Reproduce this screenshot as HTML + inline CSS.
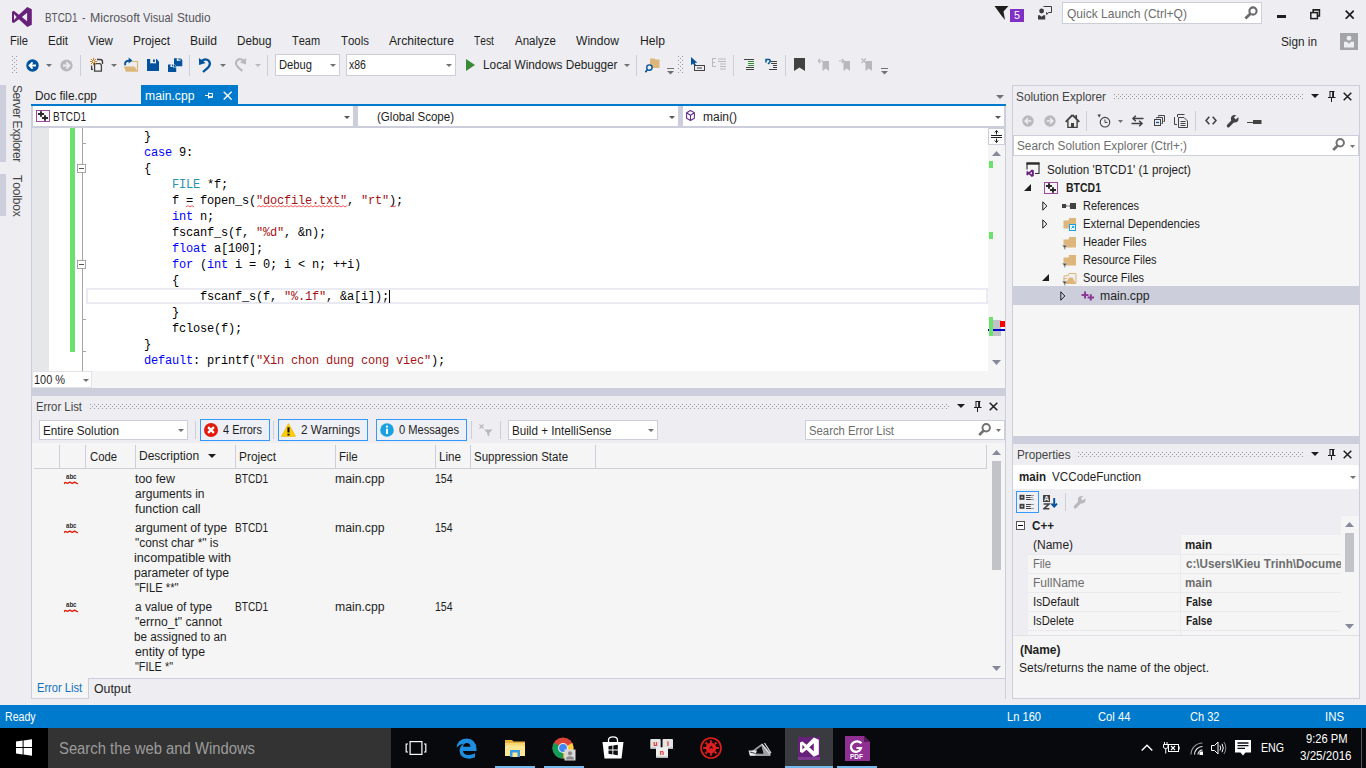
<!DOCTYPE html>
<html><head><meta charset="utf-8"><title>BTCD1 - Microsoft Visual Studio</title>
<style>
html,body{margin:0;padding:0;}
body{width:1366px;height:768px;overflow:hidden;background:#eeeef2;position:relative;font-family:"Liberation Sans",sans-serif;}
body div,body svg,body span.t{position:absolute;}
span.t{white-space:pre;line-height:1;font-family:"Liberation Sans",sans-serif;font-kerning:none;}
span.m{font-family:"Liberation Mono",monospace;}
</style></head><body>

<div style="left:0px;top:85px;width:6px;height:77px;background:#cccedb;"></div>
<div style="left:0px;top:174px;width:6px;height:42px;background:#cccedb;"></div>
<span class="t" style="left:22.5px;top:85.16px;font-size:12px;color:#444;transform-origin:0 0;transform:rotate(90deg);letter-spacing:-0.442px;">Server Explorer</span>
<span class="t" style="left:22.5px;top:174.66px;font-size:12px;color:#444;transform-origin:0 0;transform:rotate(90deg);letter-spacing:-0.171px;">Toolbox</span>
<svg style="left:12px;top:7px;" width="20" height="20" viewBox="0 0 20 20"><path fill="#68217a" d="M15.3 0L19.8 2.2V17.7L15.3 19.9L6.9 12.3L1.8 16.1L0 15.2V4.7L1.8 3.8L6.9 7.7ZM15.1 5.7L9.9 10L15.1 14.3ZM2 7.1V12.9L4.7 10Z"/></svg>
<span class="t" style="left:44.50px;top:11.00px;font-size:13px;color:#55555a;transform-origin:0.00px 50%;transform:scaleX(0.7635);">BTCD1</span>
<span class="t" style="left:82.00px;top:11.00px;font-size:13px;color:#55555a;transform-origin:0.00px 50%;transform:scaleX(0.7975);">-</span>
<span class="t" style="left:89.50px;top:11.00px;font-size:13px;color:#55555a;transform-origin:0.00px 50%;transform:scaleX(0.9479);">Microsoft</span>
<span class="t" style="left:143.00px;top:11.00px;font-size:13px;color:#55555a;transform-origin:0.00px 50%;transform:scaleX(0.8473);">Visual</span>
<span class="t" style="left:177.00px;top:11.00px;font-size:13px;color:#55555a;transform-origin:0.00px 50%;transform:scaleX(0.9080);">Studio</span>
<svg style="left:994px;top:6px;" width="15" height="14" viewBox="0 0 15 14"><path d="M0.5 0H14.5L9.5 5.5L11 14L7 9Z" fill="#1e1e1e"/></svg>
<div style="left:1010px;top:9px;width:14px;height:13px;background:#7e31c4;"></div>
<span class="t" style="left:1014.00px;top:10.25px;font-size:11.5px;color:#fff;transform-origin:0.00px 50%;transform:scaleX(0.9397);">5</span>
<svg style="left:1038px;top:6px;" width="15" height="14" viewBox="0 0 15 14"><path d="M5.5 0.5H13.5V6.5H10.5L8.7 8.6V6.5H8" fill="none" stroke="#3b3b3b" stroke-width="1"/><circle cx="3.6" cy="5" r="2.4" fill="#3b3b3b"/><path d="M0 13.5V9.2H1.8L3.6 10.8L5.4 9.2H7.2V13.5Z" fill="#3b3b3b"/></svg>
<div style="left:1062px;top:2px;width:200px;height:22px;background:#fff;border:1px solid #ccced9;box-sizing:border-box;"></div>
<svg style="left:1244px;top:6px;" width="14" height="14" viewBox="0 0 14 14"><circle cx="9" cy="5" r="3.6" fill="none" stroke="#6a6a6a" stroke-width="2.1"/><path d="M6.3 7.7L1.4 12.6" stroke="#6a6a6a" stroke-width="2.8"/></svg>
<div style="left:1277px;top:15px;width:9px;height:3px;background:#1e1e1e;"></div>
<svg style="left:1310px;top:9px;" width="11" height="11" viewBox="0 0 11 11"><path d="M3.2 3V0.9H9.4V7H7.6" fill="none" stroke="#1e1e1e" stroke-width="1.6"/><rect x="0.8" y="3.6" width="6.6" height="6" fill="none" stroke="#1e1e1e" stroke-width="1.5"/></svg>
<svg style="left:1344.5px;top:9.5px;" width="9.5" height="9.5" viewBox="0 0 9.5 9.5"><path d="M0.7 0.7L8.8 8.8M8.8 0.7L0.7 8.8" stroke="#1e1e1e" stroke-width="1.7" fill="none"/></svg>
<div style="left:1340px;top:33px;width:18px;height:17px;background:#a2a4a5;"></div>
<svg style="left:1340px;top:33px;" width="18" height="17" viewBox="0 0 18 17"><circle cx="9" cy="5.2" r="2.4" fill="#eeeef2"/><path d="M4 14.5V8.8H7L9 10.8L11 8.8H14V14.5Z" fill="#eeeef2"/></svg>
<span class="t" style="left:1067.00px;top:7.00px;font-size:13px;color:#6d6d6d;transform-origin:0.00px 50%;transform:scaleX(0.9250);">Quick Launch (Ctrl+Q)</span>
<span class="t" style="left:1280.50px;top:35.75px;font-size:12.5px;color:#1e1e1e;transform-origin:0.00px 50%;transform:scaleX(0.9427);">Sign in</span>
<span class="t" style="left:10.00px;top:34.75px;font-size:12.5px;color:#1e1e1e;transform-origin:0.00px 50%;transform:scaleX(0.8940);">File</span>
<span class="t" style="left:48.00px;top:34.75px;font-size:12.5px;color:#1e1e1e;transform-origin:0.00px 50%;transform:scaleX(0.9296);">Edit</span>
<span class="t" style="left:88.00px;top:34.75px;font-size:12.5px;color:#1e1e1e;transform-origin:0.00px 50%;transform:scaleX(0.9194);">View</span>
<span class="t" style="left:133.00px;top:34.75px;font-size:12.5px;color:#1e1e1e;transform-origin:0.00px 50%;transform:scaleX(0.9511);">Project</span>
<span class="t" style="left:190.00px;top:34.75px;font-size:12.5px;color:#1e1e1e;transform-origin:0.00px 50%;transform:scaleX(0.9711);">Build</span>
<span class="t" style="left:237.00px;top:34.75px;font-size:12.5px;color:#1e1e1e;transform-origin:0.00px 50%;transform:scaleX(0.9366);">Debug</span>
<span class="t" style="left:292.00px;top:34.75px;font-size:12.5px;color:#1e1e1e;transform-origin:0.00px 50%;transform:scaleX(0.8773);">Team</span>
<span class="t" style="left:341.00px;top:34.75px;font-size:12.5px;color:#1e1e1e;transform-origin:0.00px 50%;transform:scaleX(0.9157);">Tools</span>
<span class="t" style="left:389.00px;top:34.75px;font-size:12.5px;color:#1e1e1e;transform-origin:0.00px 50%;transform:scaleX(0.9738);">Architecture</span>
<span class="t" style="left:474.00px;top:34.75px;font-size:12.5px;color:#1e1e1e;transform-origin:0.00px 50%;transform:scaleX(0.8217);">Test</span>
<span class="t" style="left:515.00px;top:34.75px;font-size:12.5px;color:#1e1e1e;transform-origin:0.00px 50%;transform:scaleX(0.9207);">Analyze</span>
<span class="t" style="left:576.00px;top:34.75px;font-size:12.5px;color:#1e1e1e;transform-origin:0.00px 50%;transform:scaleX(0.9649);">Window</span>
<span class="t" style="left:640.00px;top:34.75px;font-size:12.5px;color:#1e1e1e;transform-origin:0.00px 50%;transform:scaleX(0.9719);">Help</span>
<svg style="left:12px;top:56px;" width="5" height="18" viewBox="0 0 5 18"><defs><pattern id="v176" width="4" height="4" patternUnits="userSpaceOnUse"><rect x="0" y="0" width="1" height="1" fill="#999"/><rect x="2" y="2" width="1" height="1" fill="#999"/></pattern></defs><rect width="5" height="18" fill="url(#v176)"/></svg>
<svg style="left:25.5px;top:58.5px;" width="13" height="13" viewBox="0 0 13 13"><circle cx="6.5" cy="6.5" r="6.2" fill="#00539c"/><path d="M10 6.5H4M6.6 3.4L3.5 6.5L6.6 9.6" stroke="#fff" stroke-width="1.8" fill="none"/></svg>
<svg style="left:46.0px;top:64.0px;" width="6" height="3" viewBox="0 0 6 3"><path d="M0 0H6L3.0 3Z" fill="#717171"/></svg>
<svg style="left:59.5px;top:58.5px;" width="13" height="13" viewBox="0 0 13 13"><circle cx="6.5" cy="6.5" r="6.1" fill="#b8b8bd"/><path d="M3 6.5H9M6.4 3.4L9.5 6.5L6.4 9.6" stroke="#eeeef2" stroke-width="1.8" fill="none"/></svg>
<div style="left:80px;top:55px;width:1px;height:21px;background:#ccced9;"></div>
<svg style="left:90px;top:57px;" width="14" height="16" viewBox="0 0 14 16"><path d="M7 2.5H10.3Q12.5 2.5 12.5 4.8V7" fill="none" stroke="#424242" stroke-width="1.4"/><path d="M4.6 6.6H10L11.4 8V14.2H4.6Z" fill="#f3f3f5" stroke="#424242" stroke-width="1.3"/><path d="M1.6 8.6V12.4H3" fill="none" stroke="#424242" stroke-width="1.3"/><path d="M3.5 0.8V8.2M-0.2 4.5H7.2M0.9 1.9L6.1 7.1M6.1 1.9L0.9 7.1" stroke="#c27d1a" stroke-width="0.95"/><circle cx="3.5" cy="4.5" r="1" fill="#eeeef2"/></svg>
<svg style="left:111.0px;top:64.0px;" width="6" height="3" viewBox="0 0 6 3"><path d="M0 0H6L3.0 3Z" fill="#717171"/></svg>
<svg style="left:123px;top:57px;" width="16" height="16" viewBox="0 0 16 16"><path d="M8 4.5H14.5V14.5" fill="none" stroke="#dcb67a" stroke-width="1.2"/><path d="M1 9.5H11.5L14.8 14.8H2.8Z" fill="#dcb67a"/><path d="M2.2 8.2Q1.2 3.6 6.8 3.6" fill="none" stroke="#00539c" stroke-width="1.9"/><path d="M5.6 0.6L9.4 3.6L5.6 6.6Z" fill="#00539c"/></svg>
<svg style="left:147px;top:59px;" width="12" height="12" viewBox="0 0 12 12"><path d="M0 0H9.6L12 2.4V12H0Z" fill="#00539c"/><rect x="3.2" y="0" width="5.8" height="4.3" fill="#eeeef2"/><rect x="6" y="0.5" width="1.9" height="2.4" fill="#00539c"/></svg>
<svg style="left:168px;top:57.5px;" width="14.5" height="14.5" viewBox="0 0 14.5 14.5"><path d="M6 0.3H12.6L14.3 2V8.3H6Z" fill="#00539c"/><rect x="8.8" y="0.3" width="3.6" height="2.6" fill="#eeeef2"/><rect x="10.6" y="0.6" width="1.2" height="1.6" fill="#00539c"/><path d="M0 6.4H5.2V9.2H8.2V14.3H0Z" fill="#00539c"/><path d="M5.2 6.4H6.4L8.2 8.2V9.2H5.2Z" fill="#00539c" stroke="#eeeef2" stroke-width="0.5"/><rect x="2.5" y="6.4" width="3" height="2.6" fill="#eeeef2"/><rect x="4" y="6.7" width="1" height="1.6" fill="#00539c"/></svg>
<div style="left:189px;top:55px;width:1px;height:21px;background:#ccced9;"></div>
<svg style="left:198px;top:56.5px;" width="14" height="16" viewBox="0 0 14 16"><path d="M3.4 4.2Q7.4 0.8 10.6 3.6Q13.4 7 10 10.6L5 15" stroke="#00539c" stroke-width="2.3" fill="none"/><path d="M0.9 1L1.1 8L7.6 6Z" fill="#00539c"/></svg>
<svg style="left:220.0px;top:64.0px;" width="6" height="3" viewBox="0 0 6 3"><path d="M0 0H6L3.0 3Z" fill="#717171"/></svg>
<svg style="left:233.5px;top:57px;" width="13" height="15" viewBox="0 0 13 15"><g transform="translate(13,0) scale(-0.93,0.93)"><path d="M3.4 4.2Q7.4 0.8 10.6 3.6Q13.4 7 10 10.6L5 15" stroke="#b8b8bd" stroke-width="2.3" fill="none"/><path d="M0.9 1L1.1 8L7.6 6Z" fill="#b8b8bd"/></g></svg>
<svg style="left:255.0px;top:64.0px;" width="6" height="3" viewBox="0 0 6 3"><path d="M0 0H6L3.0 3Z" fill="#b8b8bd"/></svg>
<div style="left:267px;top:55px;width:1px;height:21px;background:#ccced9;"></div>
<div style="left:275px;top:54px;width:65px;height:22px;background:#fff;border:1px solid #ccced9;box-sizing:border-box;"></div>
<svg style="left:329.5px;top:64.0px;" width="6" height="3" viewBox="0 0 6 3"><path d="M0 0H6L3.0 3Z" fill="#717171"/></svg>
<div style="left:346px;top:54px;width:110px;height:22px;background:#fff;border:1px solid #ccced9;box-sizing:border-box;"></div>
<svg style="left:445.5px;top:64.0px;" width="6" height="3" viewBox="0 0 6 3"><path d="M0 0H6L3.0 3Z" fill="#717171"/></svg>
<svg style="left:466px;top:59px;" width="9" height="12" viewBox="0 0 9 12"><path d="M0 0L9 6L0 12Z" fill="#388a34"/></svg>
<svg style="left:623.5px;top:64.0px;" width="6" height="3" viewBox="0 0 6 3"><path d="M0 0H6L3.0 3Z" fill="#717171"/></svg>
<div style="left:636px;top:55px;width:1px;height:21px;background:#ccced9;"></div>
<svg style="left:645px;top:58px;" width="15" height="15" viewBox="0 0 15 15"><path d="M5 0.5H9.5L10.5 1.5H14.5V10H5Z" fill="#dcb67a"/><circle cx="4.4" cy="9.6" r="2.7" fill="#eeeef2" stroke="#00539c" stroke-width="1.4"/><path d="M2.5 11.5L0.4 14.2" stroke="#00539c" stroke-width="1.7"/></svg>
<svg style="left:666.5px;top:68px;" width="7" height="7" viewBox="0 0 7 7"><path d="M0 0.5H7" stroke="#717171"/><path d="M0 3H7L3.5 6.5Z" fill="#717171"/></svg>
<svg style="left:678px;top:56px;" width="5" height="18" viewBox="0 0 5 18"><defs><pattern id="v6836" width="4" height="4" patternUnits="userSpaceOnUse"><rect x="0" y="0" width="1" height="1" fill="#999"/><rect x="2" y="2" width="1" height="1" fill="#999"/></pattern></defs><rect width="5" height="18" fill="url(#v6836)"/></svg>
<svg style="left:690px;top:57px;" width="15" height="15" viewBox="0 0 15 15"><path d="M1 0L1 8.3L3 6.4L4.8 9.8L6.4 9L4.7 5.8H7.4Z" fill="#00539c"/><rect x="4.5" y="8.5" width="10" height="5" fill="#eeeef2" stroke="#424242"/><path d="M7 11H12" stroke="#424242"/></svg>
<svg style="left:712px;top:58px;" width="15" height="13" viewBox="0 0 15 13"><path d="M4 0.5H0.5V8.5H4M0.5 4.5H3" stroke="#b8b8bd" fill="none"/><path d="M6 1H14M6 3.5H14M8 6H14M8 8.5H14M8 11H14" stroke="#b8b8bd"/></svg>
<div style="left:733px;top:55px;width:1px;height:21px;background:#ccced9;"></div>
<svg style="left:744px;top:59px;" width="11" height="11" viewBox="0 0 11 11"><path d="M0 0.5H10M2 8.5H10M2 10.5H10" stroke="#424242"/><path d="M4 2.5H10M4 4.5H10M4 6.5H10" stroke="#388a34"/></svg>
<svg style="left:765px;top:58px;" width="13" height="13" viewBox="0 0 13 13"><path d="M1 4.5V1.5H4.5Q6 2.5 4.5 4.5L3 6" stroke="#00539c" stroke-width="1.5" fill="none"/><path d="M6 3.5H12M6 5.5H12M8 7.5H12M8 9.5H12M4 11.5H12" stroke="#424242"/></svg>
<div style="left:785px;top:55px;width:1px;height:21px;background:#ccced9;"></div>
<svg style="left:794px;top:58px;" width="11" height="13" viewBox="0 0 11 13"><path d="M0 0H11V13L5.5 9.5L0 13Z" fill="#424242"/></svg>
<svg style="left:818px;top:58px;" width="12" height="13" viewBox="0 0 12 13"><path d="M4.5 3H11V13L7.8 10.5L4.5 13Z" fill="#b8b8bd"/><path d="M0 3H5M2.2 0.8L0 3L2.2 5.2" stroke="#b8b8bd" fill="none" stroke-width="1.2"/></svg>
<svg style="left:839px;top:58px;" width="12" height="13" viewBox="0 0 12 13"><path d="M4.5 3H11V13L7.8 10.5L4.5 13Z" fill="#b8b8bd"/><path d="M0 3H5M2.8 0.8L5 3L2.8 5.2" stroke="#b8b8bd" fill="none" stroke-width="1.2"/></svg>
<svg style="left:861px;top:58px;" width="12" height="13" viewBox="0 0 12 13"><path d="M4.5 3H11V13L7.8 10.5L4.5 13Z" fill="#b8b8bd"/><path d="M0.5 0.5L5 5M5 0.5L0.5 5" stroke="#b8b8bd" fill="none" stroke-width="1.2"/></svg>
<svg style="left:880.5px;top:68px;" width="7" height="7" viewBox="0 0 7 7"><path d="M0 0.5H7" stroke="#717171"/><path d="M0 3H7L3.5 6.5Z" fill="#717171"/></svg>
<span class="t" style="left:279.00px;top:58.75px;font-size:12.5px;color:#1e1e1e;transform-origin:0.00px 50%;transform:scaleX(0.8954);">Debug</span>
<span class="t" style="left:349.00px;top:58.75px;font-size:12.5px;color:#1e1e1e;transform-origin:0.00px 50%;transform:scaleX(0.8414);">x86</span>
<span class="t" style="left:483.00px;top:58.75px;font-size:12.5px;color:#1e1e1e;transform-origin:0.00px 50%;transform:scaleX(0.9445);">Local Windows Debugger</span>
<span class="t" style="left:35.00px;top:89.75px;font-size:12.5px;color:#1e1e1e;transform-origin:0.00px 50%;transform:scaleX(0.9488);">Doc file.cpp</span>
<div style="left:141px;top:85px;width:97px;height:20px;background:#007acc;"></div>
<span class="t" style="left:145.00px;top:89.75px;font-size:12.5px;color:#fff;transform-origin:0.00px 50%;transform:scaleX(0.9755);">main.cpp</span>
<svg style="left:205px;top:92px;" width="9" height="7" viewBox="0 0 9 7"><path d="M0 3.5H3.5M3.5 0.5V6.5M3.5 1.5H7.5V5.5H3.5M3.5 4.7H7.5" stroke="#fff" fill="none"/></svg>
<svg style="left:223.2px;top:90.5px;" width="9.3" height="9.3" viewBox="0 0 9.3 9.3"><path d="M0.7 0.7L8.600000000000001 8.600000000000001M8.600000000000001 0.7L0.7 8.600000000000001" stroke="#fff" stroke-width="1.4" fill="none"/></svg>
<svg style="left:995.5px;top:94.5px;" width="8" height="4" viewBox="0 0 8 4"><path d="M0 0H8L4.0 4Z" fill="#717171"/></svg>
<div style="left:31px;top:104px;width:975px;height:2px;background:#007acc;"></div>
<div style="left:31px;top:106px;width:975px;height:22px;background:#cccedb;"></div>
<div style="left:33px;top:106px;width:320px;height:20px;background:#fff;"></div>
<div style="left:358px;top:106px;width:320px;height:20px;background:#fff;"></div>
<div style="left:683px;top:106px;width:321px;height:20px;background:#fff;"></div>
<svg style="left:35.5px;top:110px;" width="14" height="12" viewBox="0 0 14 12"><rect x="0.5" y="0.5" width="13" height="11" fill="#f6f6f6" stroke="#a0489a"/><path d="M2 4H8M5 1.2V6.8M6 8H12M9 5.2V10.8" stroke="#2b2b2b" stroke-width="2" fill="none"/></svg>
<svg style="left:344.0px;top:115.5px;" width="6" height="3" viewBox="0 0 6 3"><path d="M0 0H6L3.0 3Z" fill="#555"/></svg>
<svg style="left:669.0px;top:115.5px;" width="6" height="3" viewBox="0 0 6 3"><path d="M0 0H6L3.0 3Z" fill="#555"/></svg>
<svg style="left:994.5px;top:115.5px;" width="6" height="3" viewBox="0 0 6 3"><path d="M0 0H6L3.0 3Z" fill="#555"/></svg>
<svg style="left:686px;top:110px;" width="9" height="11" viewBox="0 0 9 11"><path d="M4.5 0.6L8.4 2.8V8.2L4.5 10.4L0.6 8.2V2.8Z M0.6 2.8L4.5 5.2L8.4 2.8M4.5 5.2V10.4" fill="#fff" stroke="#652d90" stroke-width="1.1" stroke-linejoin="round"/></svg>
<span class="t" style="left:53.00px;top:110.75px;font-size:12.5px;color:#1e1e1e;transform-origin:0.00px 50%;transform:scaleX(0.8050);">BTCD1</span>
<span class="t" style="left:377.00px;top:110.75px;font-size:12.5px;color:#1e1e1e;transform-origin:0.00px 50%;transform:scaleX(0.9241);">(Global Scope)</span>
<span class="t" style="left:703.00px;top:110.75px;font-size:12.5px;color:#1e1e1e;transform-origin:0.00px 50%;transform:scaleX(0.9617);">main()</span>
<div style="left:31px;top:128px;width:975px;height:243px;background:#fff;"></div>
<div style="left:31px;top:128px;width:1px;height:268px;background:#cccedb;"></div>
<div style="left:32px;top:128px;width:17px;height:243px;background:#e6e7e8;"></div>
<div style="left:69.5px;top:128px;width:5px;height:224px;background:#6ce26c;"></div>
<div style="left:82px;top:128px;width:1px;height:243px;background:#a5a5a5;"></div>
<div style="left:82px;top:143px;width:4px;height:1px;background:#a5a5a5;"></div>
<div style="left:82px;top:319px;width:4px;height:1px;background:#a5a5a5;"></div>
<div style="left:82px;top:351px;width:4px;height:1px;background:#a5a5a5;"></div>
<div style="left:77px;top:164px;width:9px;height:9px;background:#fff;border:1px solid #a5a5a5;box-sizing:border-box;"></div>
<div style="left:79px;top:168px;width:5px;height:1px;background:#555;"></div>
<div style="left:77px;top:260px;width:9px;height:9px;background:#fff;border:1px solid #a5a5a5;box-sizing:border-box;"></div>
<div style="left:79px;top:264px;width:5px;height:1px;background:#555;"></div>
<div style="left:86px;top:287.5px;width:901.5px;height:16px;border:2px solid #eaeaf2;box-sizing:border-box;"></div>
<span class="t m" style="left:88.00px;top:131.00px;font-size:12px;color:#000;letter-spacing:-0.2px;">        }</span>
<span class="t m" style="left:88.00px;top:147.00px;font-size:12px;color:#000;letter-spacing:-0.2px;">        <span style="color:#0000ff">case</span> 9:</span>
<span class="t m" style="left:88.00px;top:163.00px;font-size:12px;color:#000;letter-spacing:-0.2px;">        {</span>
<span class="t m" style="left:88.00px;top:179.00px;font-size:12px;color:#000;letter-spacing:-0.2px;">            <span style="color:#2b91af">FILE</span> *f;</span>
<span class="t m" style="left:88.00px;top:195.00px;font-size:12px;color:#000;letter-spacing:-0.2px;">            f = fopen_s(<span style="color:#a31515">"docfile.txt"</span>, <span style="color:#a31515">"rt"</span>);</span>
<span class="t m" style="left:88.00px;top:211.00px;font-size:12px;color:#000;letter-spacing:-0.2px;">            <span style="color:#0000ff">int</span> n;</span>
<span class="t m" style="left:88.00px;top:227.00px;font-size:12px;color:#000;letter-spacing:-0.2px;">            fscanf_s(f, <span style="color:#a31515">"%d"</span>, &amp;n);</span>
<span class="t m" style="left:88.00px;top:243.00px;font-size:12px;color:#000;letter-spacing:-0.2px;">            <span style="color:#0000ff">float</span> a[100];</span>
<span class="t m" style="left:88.00px;top:259.00px;font-size:12px;color:#000;letter-spacing:-0.2px;">            <span style="color:#0000ff">for</span> (<span style="color:#0000ff">int</span> i = 0; i &lt; n; ++i)</span>
<span class="t m" style="left:88.00px;top:275.00px;font-size:12px;color:#000;letter-spacing:-0.2px;">            {</span>
<span class="t m" style="left:88.00px;top:291.00px;font-size:12px;color:#000;letter-spacing:-0.2px;">                fscanf_s(f, <span style="color:#a31515">"%.1f"</span>, &amp;a[i]);</span>
<span class="t m" style="left:88.00px;top:307.00px;font-size:12px;color:#000;letter-spacing:-0.2px;">            }</span>
<span class="t m" style="left:88.00px;top:323.00px;font-size:12px;color:#000;letter-spacing:-0.2px;">            fclose(f);</span>
<span class="t m" style="left:88.00px;top:339.00px;font-size:12px;color:#000;letter-spacing:-0.2px;">        }</span>
<span class="t m" style="left:88.00px;top:355.00px;font-size:12px;color:#000;letter-spacing:-0.2px;">        <span style="color:#0000ff">default</span>: printf(<span style="color:#a31515">"Xin chon dung cong viec"</span>);</span>
<div style="left:389px;top:290px;width:1px;height:13px;background:#000;"></div>
<svg style="left:186px;top:205px;" width="8" height="3" viewBox="0 0 8 3"><path d="M0 2 L2 0.6 L4 2 L6 0.6 L8 2 L10 0.6 L12 2" stroke="#f03030" stroke-width="0.8" fill="none"/></svg>
<svg style="left:257px;top:205px;" width="90" height="3" viewBox="0 0 90 3"><path d="M0 2 L2 0.6 L4 2 L6 0.6 L8 2 L10 0.6 L12 2 L14 0.6 L16 2 L18 0.6 L20 2 L22 0.6 L24 2 L26 0.6 L28 2 L30 0.6 L32 2 L34 0.6 L36 2 L38 0.6 L40 2 L42 0.6 L44 2 L46 0.6 L48 2 L50 0.6 L52 2 L54 0.6 L56 2 L58 0.6 L60 2 L62 0.6 L64 2 L66 0.6 L68 2 L70 0.6 L72 2 L74 0.6 L76 2 L78 0.6 L80 2 L82 0.6 L84 2 L86 0.6 L88 2 L90 0.6 L92 2" stroke="#f03030" stroke-width="0.8" fill="none"/></svg>
<svg style="left:389.5px;top:205px;" width="6" height="3" viewBox="0 0 6 3"><path d="M0 2 L2 0.6 L4 2 L6 0.6 L8 2" stroke="#f03030" stroke-width="0.8" fill="none"/></svg>
<div style="left:988px;top:128px;width:17px;height:243px;background:#f5f5f5;"></div>
<div style="left:1005px;top:128px;width:1px;height:268px;background:#cccedb;"></div>
<div style="left:988px;top:128px;width:17px;height:17px;background:#fff;border:1px solid #ccced9;box-sizing:border-box;"></div>
<svg style="left:990px;top:130px;" width="13" height="13" viewBox="0 0 13 13"><path d="M1 5.5H12M1 7.5H12M6.5 0.5V4.5M6.5 8.5V12.5M4.8 2.5L6.5 0.5L8.2 2.5M4.8 10.5L6.5 12.5L8.2 10.5" stroke="#1e1e1e" fill="none"/></svg>
<svg style="left:992px;top:151px;" width="9" height="5" viewBox="0 0 9 5"><path d="M0 5L4.5 0L9 5Z" fill="#868999"/></svg>
<svg style="left:992px;top:360px;" width="9" height="5" viewBox="0 0 9 5"><path d="M0 0H9L4.5 5Z" fill="#868999"/></svg>
<div style="left:989px;top:161px;width:4px;height:7px;background:#6ce26c;"></div>
<div style="left:989px;top:232px;width:4px;height:7px;background:#6ce26c;"></div>
<div style="left:992px;top:320px;width:9px;height:16px;background:#c2c3c9;"></div>
<div style="left:1000px;top:321px;width:5px;height:6px;background:#ff0000;"></div>
<div style="left:988px;top:329px;width:17px;height:2px;background:#0000cd;"></div>
<div style="left:989px;top:317px;width:4px;height:19px;background:#6ce26c;"></div>
<div style="left:32px;top:371px;width:973px;height:17px;background:#f5f5f5;"></div>
<div style="left:32px;top:371px;width:60px;height:17px;background:#fff;border:1px solid #e2e2ea;box-sizing:border-box;"></div>
<span class="t" style="left:34.00px;top:374.00px;font-size:12px;color:#1e1e1e;transform-origin:0.00px 50%;transform:scaleX(0.9131);">100 %</span>
<svg style="left:83.0px;top:379.0px;" width="6" height="3" viewBox="0 0 6 3"><path d="M0 0H6L3.0 3Z" fill="#717171"/></svg>
<div style="left:31px;top:388px;width:975px;height:8px;background:#cccedb;"></div>
<div style="left:31px;top:396px;width:1px;height:303px;background:#cccedb;"></div>
<div style="left:1005px;top:396px;width:1px;height:303px;background:#cccedb;"></div>
<span class="t" style="left:36.00px;top:400.75px;font-size:12.5px;color:#444;transform-origin:0.00px 50%;transform:scaleX(0.9072);">Error List</span>
<svg style="left:90px;top:404px;" width="859" height="5" viewBox="0 0 859 5"><defs><pattern id="g1304" width="4" height="4" patternUnits="userSpaceOnUse"><rect x="0" y="0" width="1" height="1" fill="#999"/><rect x="2" y="2" width="1" height="1" fill="#999"/></pattern></defs><rect width="859" height="5" fill="url(#g1304)"/></svg>
<svg style="left:956.75px;top:404.0px;" width="8" height="4" viewBox="0 0 8 4"><path d="M0 0H8L4.0 4Z" fill="#1e1e1e"/></svg>
<svg style="left:973.75px;top:401px;" width="8" height="11" viewBox="0 0 8 11"><path d="M1.5 0.5H6.5M2 0.5V6.5M5.5 0.5V6.5M4.6 0.5V6.5M0 6.5H7.5M3.5 6.5V11" stroke="#1e1e1e" stroke-width="1" fill="none"/></svg>
<svg style="left:989.05px;top:401.8px;" width="9" height="9" viewBox="0 0 9 9"><path d="M0.7 0.7L8.3 8.3M8.3 0.7L0.7 8.3" stroke="#1e1e1e" stroke-width="1.5" fill="none"/></svg>
<div style="left:39px;top:420px;width:149px;height:20px;background:#fff;border:1px solid #ccced9;box-sizing:border-box;"></div>
<span class="t" style="left:43.00px;top:425.00px;font-size:12px;color:#1e1e1e;transform-origin:0.00px 50%;transform:scaleX(0.9746);">Entire Solution</span>
<svg style="left:178.0px;top:429.0px;" width="6" height="3" viewBox="0 0 6 3"><path d="M0 0H6L3.0 3Z" fill="#717171"/></svg>
<div style="left:195px;top:421px;width:1px;height:18px;background:#ccced9;"></div>
<div style="left:200px;top:419px;width:70px;height:22px;background:#eef0f6;border:1px solid #3399ff;box-sizing:border-box;"></div>
<div style="left:278px;top:419px;width:90px;height:22px;background:#eef0f6;border:1px solid #3399ff;box-sizing:border-box;"></div>
<div style="left:376px;top:419px;width:91px;height:22px;background:#eef0f6;border:1px solid #3399ff;box-sizing:border-box;"></div>
<div style="left:273px;top:421px;width:1px;height:18px;background:#ccced9;"></div>
<div style="left:471px;top:421px;width:1px;height:18px;background:#ccced9;"></div>
<div style="left:500px;top:421px;width:1px;height:18px;background:#ccced9;"></div>
<svg style="left:204px;top:423px;" width="14" height="14" viewBox="0 0 14 14"><circle cx="7" cy="7" r="7" fill="#e21b0c"/><path d="M4.1 4.1L9.9 9.9M9.9 4.1L4.1 9.9" stroke="#fff" stroke-width="2.3"/></svg>
<svg style="left:281px;top:423px;" width="15" height="14" viewBox="0 0 15 14"><path d="M7.5 0.6L14.6 13.4H0.4Z" fill="#ffcc00" stroke="#e8b300" stroke-width="0.6"/><path d="M7.5 4.2V9.6M7.5 10.8V12.6" stroke="#111" stroke-width="2.1"/></svg>
<svg style="left:380px;top:423px;" width="14" height="14" viewBox="0 0 14 14"><circle cx="7" cy="7" r="6.8" fill="#1ba1e2"/><path d="M7 5.8V11" stroke="#fff" stroke-width="1.9"/><circle cx="7" cy="3.7" r="1.1" fill="#fff"/></svg>
<svg style="left:479px;top:424px;" width="14" height="13" viewBox="0 0 14 13"><path d="M0.5 0.5L4.5 4.5M4.5 0.5L0.5 4.5" stroke="#b8b8bd" stroke-width="1.2"/><path d="M5 5.5H13.5L10.3 9V12.5L8.3 11V9Z" fill="#b8b8bd"/></svg>
<span class="t" style="left:223.00px;top:423.75px;font-size:12.5px;color:#1e1e1e;transform-origin:0.00px 50%;transform:scaleX(0.8773);">4 Errors</span>
<span class="t" style="left:301.00px;top:423.75px;font-size:12.5px;color:#1e1e1e;transform-origin:0.00px 50%;transform:scaleX(0.9330);">2 Warnings</span>
<span class="t" style="left:399.00px;top:423.75px;font-size:12.5px;color:#1e1e1e;transform-origin:0.00px 50%;transform:scaleX(0.8901);">0 Messages</span>
<div style="left:508px;top:420px;width:150px;height:20px;background:#fff;border:1px solid #ccced9;box-sizing:border-box;"></div>
<span class="t" style="left:512.00px;top:425.00px;font-size:12px;color:#1e1e1e;transform-origin:0.00px 50%;transform:scaleX(0.9723);">Build + IntelliSense</span>
<svg style="left:648.0px;top:429.0px;" width="6" height="3" viewBox="0 0 6 3"><path d="M0 0H6L3.0 3Z" fill="#717171"/></svg>
<div style="left:805px;top:420px;width:200px;height:20px;background:#fff;border:1px solid #ccced9;box-sizing:border-box;"></div>
<span class="t" style="left:809.00px;top:425.00px;font-size:12px;color:#6d6d6d;transform-origin:0.00px 50%;transform:scaleX(0.9438);">Search Error List</span>
<svg style="left:978px;top:423px;" width="13" height="13" viewBox="0 0 13 13"><circle cx="8.2" cy="4.8" r="3.7" fill="none" stroke="#717171" stroke-width="2"/><path d="M5.6 7.6L1.2 12" stroke="#717171" stroke-width="2.7"/></svg>
<svg style="left:995.5px;top:428.5px;" width="5" height="3" viewBox="0 0 5 3"><path d="M0 0H5L2.5 3Z" fill="#717171"/></svg>
<div style="left:32px;top:443px;width:973px;height:236px;background:#f5f5f5;"></div>
<div style="left:34px;top:468px;width:953px;height:1px;background:#ccced9;"></div>
<div style="left:59px;top:445px;width:1px;height:23px;background:#ccced9;"></div>
<div style="left:85px;top:445px;width:1px;height:23px;background:#ccced9;"></div>
<div style="left:135px;top:445px;width:1px;height:23px;background:#ccced9;"></div>
<div style="left:235px;top:445px;width:1px;height:23px;background:#ccced9;"></div>
<div style="left:335px;top:445px;width:1px;height:23px;background:#ccced9;"></div>
<div style="left:435px;top:445px;width:1px;height:23px;background:#ccced9;"></div>
<div style="left:470px;top:445px;width:1px;height:23px;background:#ccced9;"></div>
<div style="left:595px;top:445px;width:1px;height:23px;background:#ccced9;"></div>
<div style="left:986px;top:445px;width:1px;height:24px;background:#ccced9;"></div>
<span class="t" style="left:90.00px;top:451.00px;font-size:12px;color:#1e1e1e;transform-origin:0.00px 50%;transform:scaleX(0.9428);">Code</span>
<span class="t" style="left:139.00px;top:450.00px;font-size:12px;color:#1e1e1e;transform-origin:0.00px 50%;transform:scaleX(1.0006);">Description</span>
<span class="t" style="left:239.00px;top:451.00px;font-size:12px;color:#1e1e1e;transform-origin:0.00px 50%;transform:scaleX(0.9901);">Project</span>
<span class="t" style="left:339.00px;top:451.00px;font-size:12px;color:#1e1e1e;transform-origin:0.00px 50%;transform:scaleX(0.9644);">File</span>
<span class="t" style="left:439.00px;top:451.00px;font-size:12px;color:#1e1e1e;transform-origin:0.00px 50%;transform:scaleX(0.9740);">Line</span>
<span class="t" style="left:474.00px;top:451.00px;font-size:12px;color:#1e1e1e;transform-origin:0.00px 50%;transform:scaleX(0.9592);">Suppression State</span>
<svg style="left:208.0px;top:454.0px;" width="8" height="4" viewBox="0 0 8 4"><path d="M0 0H8L4.0 4Z" fill="#1e1e1e"/></svg>
<span class="t" style="left:135.40px;top:473.00px;font-size:12px;color:#1e1e1e;transform-origin:0.00px 50%;transform:scaleX(1.0313);">too few</span>
<span class="t" style="left:135.40px;top:488.00px;font-size:12px;color:#1e1e1e;transform-origin:0.00px 50%;transform:scaleX(1.0026);">arguments in</span>
<span class="t" style="left:135.40px;top:503.00px;font-size:12px;color:#1e1e1e;transform-origin:0.00px 50%;transform:scaleX(1.0343);">function call</span>
<span class="t" style="left:235.00px;top:473.00px;font-size:12px;color:#1e1e1e;transform-origin:0.00px 50%;transform:scaleX(0.8406);">BTCD1</span>
<span class="t" style="left:335.00px;top:473.00px;font-size:12px;color:#1e1e1e;transform-origin:0.00px 50%;transform:scaleX(1.0181);">main.cpp</span>
<span class="t" style="left:434.50px;top:473.00px;font-size:12px;color:#1e1e1e;transform-origin:0.00px 50%;transform:scaleX(0.8781);">154</span>
<span class="t" style="left:66.00px;top:472.50px;font-size:8px;color:#2b2b2b;font-weight:bold;transform-origin:0.00px 50%;transform:scaleX(0.7600);">abc</span>
<svg style="left:64px;top:480.5px;" width="14" height="4" viewBox="0 0 14 4"><path d="M0 3Q1 0.6 2.2 1.8T4.6 1.8T7 1.8T9.4 1.8T11.8 1.8T14 2.6" stroke="#e51400" stroke-width="1.3" fill="none"/></svg>
<span class="t" style="left:135.40px;top:522.00px;font-size:12px;color:#1e1e1e;transform-origin:0.00px 50%;transform:scaleX(1.0221);">argument of type</span>
<span class="t" style="left:135.40px;top:537.00px;font-size:12px;color:#1e1e1e;transform-origin:0.00px 50%;transform:scaleX(0.9954);">"const char *" is</span>
<span class="t" style="left:134.40px;top:552.00px;font-size:12px;color:#1e1e1e;transform-origin:0.00px 50%;transform:scaleX(1.0547);">incompatible with</span>
<span class="t" style="left:134.40px;top:567.00px;font-size:12px;color:#1e1e1e;transform-origin:0.00px 50%;transform:scaleX(1.0106);">parameter of type</span>
<span class="t" style="left:135.40px;top:582.00px;font-size:12px;color:#1e1e1e;transform-origin:0.00px 50%;transform:scaleX(0.9349);">"FILE **"</span>
<span class="t" style="left:235.00px;top:522.00px;font-size:12px;color:#1e1e1e;transform-origin:0.00px 50%;transform:scaleX(0.8406);">BTCD1</span>
<span class="t" style="left:335.00px;top:522.00px;font-size:12px;color:#1e1e1e;transform-origin:0.00px 50%;transform:scaleX(1.0181);">main.cpp</span>
<span class="t" style="left:434.50px;top:522.00px;font-size:12px;color:#1e1e1e;transform-origin:0.00px 50%;transform:scaleX(0.8781);">154</span>
<span class="t" style="left:66.00px;top:521.50px;font-size:8px;color:#2b2b2b;font-weight:bold;transform-origin:0.00px 50%;transform:scaleX(0.7600);">abc</span>
<svg style="left:64px;top:529.5px;" width="14" height="4" viewBox="0 0 14 4"><path d="M0 3Q1 0.6 2.2 1.8T4.6 1.8T7 1.8T9.4 1.8T11.8 1.8T14 2.6" stroke="#e51400" stroke-width="1.3" fill="none"/></svg>
<span class="t" style="left:135.40px;top:601.00px;font-size:12px;color:#1e1e1e;transform-origin:0.00px 50%;transform:scaleX(0.9870);">a value of type</span>
<span class="t" style="left:135.40px;top:616.00px;font-size:12px;color:#1e1e1e;transform-origin:0.00px 50%;transform:scaleX(1.0122);">"errno_t" cannot</span>
<span class="t" style="left:134.40px;top:631.00px;font-size:12px;color:#1e1e1e;transform-origin:0.00px 50%;transform:scaleX(0.9770);">be assigned to an</span>
<span class="t" style="left:135.40px;top:646.00px;font-size:12px;color:#1e1e1e;transform-origin:0.00px 50%;transform:scaleX(1.0294);">entity of type</span>
<span class="t" style="left:135.40px;top:661.00px;font-size:12px;color:#1e1e1e;transform-origin:0.00px 50%;transform:scaleX(0.9077);">"FILE *"</span>
<span class="t" style="left:235.00px;top:601.00px;font-size:12px;color:#1e1e1e;transform-origin:0.00px 50%;transform:scaleX(0.8406);">BTCD1</span>
<span class="t" style="left:335.00px;top:601.00px;font-size:12px;color:#1e1e1e;transform-origin:0.00px 50%;transform:scaleX(1.0181);">main.cpp</span>
<span class="t" style="left:434.50px;top:601.00px;font-size:12px;color:#1e1e1e;transform-origin:0.00px 50%;transform:scaleX(0.8781);">154</span>
<span class="t" style="left:66.00px;top:600.50px;font-size:8px;color:#2b2b2b;font-weight:bold;transform-origin:0.00px 50%;transform:scaleX(0.7600);">abc</span>
<svg style="left:64px;top:608.5px;" width="14" height="4" viewBox="0 0 14 4"><path d="M0 3Q1 0.6 2.2 1.8T4.6 1.8T7 1.8T9.4 1.8T11.8 1.8T14 2.6" stroke="#e51400" stroke-width="1.3" fill="none"/></svg>
<div style="left:987px;top:443px;width:18px;height:235px;background:#f5f5f5;"></div>
<svg style="left:992px;top:450px;" width="9" height="5" viewBox="0 0 9 5"><path d="M0 5L4.5 0L9 5Z" fill="#868999"/></svg>
<svg style="left:992px;top:666px;" width="9" height="5" viewBox="0 0 9 5"><path d="M0 0H9L4.5 5Z" fill="#868999"/></svg>
<div style="left:992px;top:461px;width:9px;height:109px;background:#c2c3c9;"></div>
<div style="left:32px;top:678px;width:973px;height:1px;background:#cccedb;"></div>
<div style="left:31px;top:678px;width:58px;height:21px;background:#f5f5f5;border:1px solid #ccceDB;box-sizing:border-box;border-top:none;"></div>
<span class="t" style="left:37.30px;top:681.75px;font-size:12.5px;color:#0e70c0;transform-origin:0.00px 50%;transform:scaleX(0.8892);">Error List</span>
<span class="t" style="left:93.50px;top:682.75px;font-size:12.5px;color:#1e1e1e;transform-origin:0.00px 50%;transform:scaleX(0.9851);">Output</span>
<div style="left:1012px;top:85px;width:348px;height:352px;background:#f5f5f5;border:1px solid #cccedb;box-sizing:border-box;"></div>
<div style="left:1013px;top:86px;width:346px;height:50px;background:#eeeef2;"></div>
<span class="t" style="left:1016.00px;top:90.75px;font-size:12.5px;color:#444;transform-origin:0.00px 50%;transform:scaleX(0.9458);">Solution Explorer</span>
<svg style="left:1114px;top:94px;" width="189" height="5" viewBox="0 0 189 5"><defs><pattern id="g11234" width="4" height="4" patternUnits="userSpaceOnUse"><rect x="0" y="0" width="1" height="1" fill="#999"/><rect x="2" y="2" width="1" height="1" fill="#999"/></pattern></defs><rect width="189" height="5" fill="url(#g11234)"/></svg>
<svg style="left:1311.0px;top:94.0px;" width="8" height="4" viewBox="0 0 8 4"><path d="M0 0H8L4.0 4Z" fill="#1e1e1e"/></svg>
<svg style="left:1328.0px;top:91px;" width="8" height="11" viewBox="0 0 8 11"><path d="M1.5 0.5H6.5M2 0.5V6.5M5.5 0.5V6.5M4.6 0.5V6.5M0 6.5H7.5M3.5 6.5V11" stroke="#1e1e1e" stroke-width="1" fill="none"/></svg>
<svg style="left:1343.3px;top:91.8px;" width="9" height="9" viewBox="0 0 9 9"><path d="M0.7 0.7L8.3 8.3M8.3 0.7L0.7 8.3" stroke="#1e1e1e" stroke-width="1.5" fill="none"/></svg>
<svg style="left:1022px;top:115px;" width="12" height="12" viewBox="0 0 12 12"><circle cx="6" cy="6" r="5.7" fill="#b8b8bd"/><path d="M9.3 6H3.5M6 3.2L3.2 6L6 8.8" stroke="#eeeef2" stroke-width="1.6" fill="none"/></svg>
<svg style="left:1044px;top:115px;" width="12" height="12" viewBox="0 0 12 12"><circle cx="6" cy="6" r="5.7" fill="#b8b8bd"/><path d="M2.7 6H8.5M6 3.2L8.8 6L6 8.8" stroke="#eeeef2" stroke-width="1.6" fill="none"/></svg>
<svg style="left:1065px;top:114px;" width="15" height="14" viewBox="0 0 15 14"><path d="M7.5 1L14.3 7.8M7.5 1L0.7 7.8" stroke="#424242" stroke-width="1.8" fill="none"/><path d="M2.9 6.6V13.4H12.1V6.6" fill="none" stroke="#424242" stroke-width="1.4"/><rect x="6" y="9" width="3" height="4.4" fill="#424242"/><path d="M11.2 1V4.5" stroke="#424242" stroke-width="1.7"/></svg>
<div style="left:1086px;top:111px;width:1px;height:20px;background:#ccced9;"></div>
<svg style="left:1097px;top:114px;" width="14" height="14" viewBox="0 0 14 14"><circle cx="8" cy="8.2" r="4.8" fill="none" stroke="#424242" stroke-width="1.1"/><path d="M8 5.5V8.5H10.5" stroke="#424242" fill="none"/><path d="M0.5 0.5H4L2.2 3.5Z" fill="#424242"/></svg>
<svg style="left:1117.5px;top:120.0px;" width="5" height="3" viewBox="0 0 5 3"><path d="M0 0H5L2.5 3Z" fill="#717171"/></svg>
<svg style="left:1131px;top:115px;" width="13" height="12" viewBox="0 0 13 12"><path d="M12.5 3.5H2M4.8 0.8L2 3.5L4.8 6.2M0.5 8.5H11M8.2 5.8L11 8.5L8.2 11.2" stroke="#424242" stroke-width="1.5" fill="none"/></svg>
<svg style="left:1154px;top:115px;" width="11" height="11" viewBox="0 0 11 11"><path d="M4.5 1.5V0.5H10.5V6.5H9.5M2.5 3.5V2.5H8.5V8.5H7.5" fill="none" stroke="#424242"/><rect x="0.5" y="4.5" width="6" height="6" fill="none" stroke="#424242"/><path d="M2 7.5H5" stroke="#00539c" stroke-width="1.3"/></svg>
<svg style="left:1174px;top:114px;" width="14" height="14" viewBox="0 0 14 14"><path d="M3.5 3V0.5H10.5M0.5 3V10.5H3" fill="none" stroke="#424242"/><path d="M4.5 3.5H10L13.5 7V13.5H4.5Z" fill="none" stroke="#424242"/><path d="M6.5 7.5H11.5M6.5 9.5H11.5M6.5 11.5H11.5" stroke="#424242"/></svg>
<div style="left:1195px;top:111px;width:1px;height:20px;background:#ccced9;"></div>
<svg style="left:1205px;top:116px;" width="12" height="9" viewBox="0 0 12 9"><path d="M4.3 0.8L1 4.5L4.3 8.2M7.7 0.8L11 4.5L7.7 8.2" stroke="#424242" stroke-width="1.6" fill="none"/></svg>
<svg style="left:1226px;top:114px;" width="13" height="14" viewBox="0 0 13 14"><path d="M2.3 11.8L7.4 6.6" stroke="#424242" stroke-width="3.1" stroke-linecap="round"/><circle cx="8.7" cy="4.7" r="3.8" fill="#424242"/><path d="M8.9 4.5L13.2 0.2" stroke="#eeeef2" stroke-width="2.7"/></svg>
<svg style="left:1247px;top:118px;" width="15" height="6" viewBox="0 0 15 6"><path d="M0 4.5H6" stroke="#424242"/><rect x="6" y="2" width="8.5" height="4" fill="#424242"/></svg>
<div style="left:1013px;top:135px;width:346px;height:21px;background:#fff;border:1px solid #ccced9;box-sizing:border-box;"></div>
<span class="t" style="left:1017.00px;top:140.00px;font-size:12px;color:#6d6d6d;transform-origin:0.00px 50%;transform:scaleX(0.9823);">Search Solution Explorer (Ctrl+;)</span>
<svg style="left:1332px;top:138px;" width="13" height="13" viewBox="0 0 13 13"><circle cx="8.2" cy="4.8" r="3.7" fill="none" stroke="#717171" stroke-width="2"/><path d="M5.6 7.6L1.2 12" stroke="#717171" stroke-width="2.7"/></svg>
<svg style="left:1349.5px;top:144.5px;" width="5" height="3" viewBox="0 0 5 3"><path d="M0 0H5L2.5 3Z" fill="#717171"/></svg>
<div style="left:1013px;top:286px;width:346px;height:19px;background:#cccedb;"></div>
<span class="t" style="left:1046.50px;top:164.00px;font-size:12px;color:#1e1e1e;transform-origin:0.00px 50%;transform:scaleX(0.9732);">Solution 'BTCD1' (1 project)</span>
<span class="t" style="left:1066.00px;top:182.00px;font-size:12px;color:#1e1e1e;font-weight:bold;transform-origin:0.00px 50%;transform:scaleX(0.8757);">BTCD1</span>
<span class="t" style="left:1083.00px;top:200.00px;font-size:12px;color:#1e1e1e;transform-origin:0.00px 50%;transform:scaleX(0.9127);">References</span>
<span class="t" style="left:1083.00px;top:218.00px;font-size:12px;color:#1e1e1e;transform-origin:0.00px 50%;transform:scaleX(0.9430);">External Dependencies</span>
<span class="t" style="left:1083.00px;top:236.00px;font-size:12px;color:#1e1e1e;transform-origin:0.00px 50%;transform:scaleX(0.9338);">Header Files</span>
<span class="t" style="left:1083.00px;top:254.00px;font-size:12px;color:#1e1e1e;transform-origin:0.00px 50%;transform:scaleX(0.9187);">Resource Files</span>
<span class="t" style="left:1083.00px;top:272.00px;font-size:12px;color:#1e1e1e;transform-origin:0.00px 50%;transform:scaleX(0.9148);">Source Files</span>
<span class="t" style="left:1100.00px;top:290.00px;font-size:12px;color:#1e1e1e;transform-origin:0.00px 50%;transform:scaleX(1.0181);">main.cpp</span>
<svg style="left:1026px;top:162px;" width="14" height="15" viewBox="0 0 14 15"><path d="M1 7.5V1H13V11.5H9" fill="none" stroke="#2b2b2b" stroke-width="1.1"/><rect x="0.5" y="0.5" width="13" height="2.2" fill="#2b2b2b"/><path d="M5.8 7.4L7.8 8.3V14.1L5.8 15L2.9 12.2L1.4 13.4L0.5 13V9.4L1.4 9L2.9 10.2Z M5.8 9.8L3.9 11.2L5.8 12.6Z" fill="#68217a"/></svg>
<svg style="left:1023.5px;top:184px;" width="7" height="7" viewBox="0 0 7 7"><path d="M7 0V7H0Z" fill="#1e1e1e"/></svg>
<svg style="left:1043.5px;top:181.5px;" width="14" height="12" viewBox="0 0 14 12"><rect x="0.5" y="0.5" width="13" height="11" fill="#f6f6f6" stroke="#a0489a"/><path d="M2 4H8M5 1.2V6.8M6 8H12M9 5.2V10.8" stroke="#2b2b2b" stroke-width="2" fill="none"/></svg>
<svg style="left:1042px;top:201px;" width="6" height="10" viewBox="0 0 6 10"><path d="M0.8 0.8L4.8 5L0.8 9.2Z" fill="none" stroke="#1e1e1e" stroke-width="1"/></svg>
<svg style="left:1042px;top:219px;" width="6" height="10" viewBox="0 0 6 10"><path d="M0.8 0.8L4.8 5L0.8 9.2Z" fill="none" stroke="#1e1e1e" stroke-width="1"/></svg>
<svg style="left:1059.5px;top:291px;" width="6" height="10" viewBox="0 0 6 10"><path d="M0.8 0.8L4.8 5L0.8 9.2Z" fill="none" stroke="#1e1e1e" stroke-width="1"/></svg>
<svg style="left:1041.7px;top:274.2px;" width="7" height="7" viewBox="0 0 7 7"><path d="M7 0V7H0Z" fill="#1e1e1e"/></svg>
<svg style="left:1062px;top:201.5px;" width="14" height="8" viewBox="0 0 14 8"><rect x="0" y="2" width="4" height="4" fill="#424242"/><path d="M4 4H8" stroke="#424242" stroke-width="1.2" stroke-dasharray="1.5 1"/><rect x="8" y="1" width="6" height="6" fill="#424242"/></svg>
<svg style="left:1061.5px;top:216.5px;" width="15" height="14" viewBox="0 0 15 14"><path d="M7 1H14V3H7Z" fill="#dcb67a"/><path d="M1.5 3.6H6.2L7.4 2.4H14V11.5H1.5Z" fill="#dcb67a"/><rect x="7.5" y="7.5" width="6" height="6" fill="#fff" stroke="#1ba1e2"/><path d="M9.3 11.7L11.7 9.3M9.8 9.3H11.7V11.2" stroke="#1ba1e2" fill="none"/></svg>
<svg style="left:1061.5px;top:235.5px;" width="15" height="14" viewBox="0 0 15 14"><path d="M7 1H14V3H7Z" fill="#dcb67a"/><path d="M1.5 3.6H6.2L7.4 2.4H14V11.5H1.5Z" fill="#dcb67a"/><path d="M0 9.2H5.4L3.3 11.4V13.8L2.1 13V11.4Z" fill="#424242" stroke="#f5f5f5" stroke-width="0.5"/></svg>
<svg style="left:1061.5px;top:253.5px;" width="15" height="14" viewBox="0 0 15 14"><path d="M7 1H14V3H7Z" fill="#dcb67a"/><path d="M1.5 3.6H6.2L7.4 2.4H14V11.5H1.5Z" fill="#dcb67a"/><path d="M0 9.2H5.4L3.3 11.4V13.8L2.1 13V11.4Z" fill="#424242" stroke="#f5f5f5" stroke-width="0.5"/></svg>
<svg style="left:1061.5px;top:271.5px;" width="15" height="14" viewBox="0 0 15 14"><path d="M7 1.5H14V11.5H2V3.8H6.3Z" fill="#f0eff1" stroke="#dcb67a" stroke-width="1"/><path d="M7.2 5.5H10.5L13.5 11H3.5Z" fill="#dcb67a"/><path d="M2 11V6.5H5" fill="none" stroke="#dcb67a"/><path d="M0 9.2H5.4L3.3 11.4V13.8L2.1 13V11.4Z" fill="#424242" stroke="#f5f5f5" stroke-width="0.5"/></svg>
<svg style="left:1080.5px;top:291px;" width="14" height="10" viewBox="0 0 14 10"><path d="M4 0.5V7.5M0.5 4H7.5M9.8 3.2V9.6M6.6 6.4H13" stroke="#8d3a94" stroke-width="2" fill="none"/></svg>
<div style="left:1012px;top:436px;width:348px;height:8px;background:#cccedb;"></div>
<div style="left:1012px;top:443px;width:348px;height:256px;background:#f5f5f5;border:1px solid #cccedb;box-sizing:border-box;"></div>
<div style="left:1013px;top:444px;width:346px;height:22px;background:#eeeef2;"></div>
<span class="t" style="left:1016.50px;top:448.75px;font-size:12.5px;color:#444;transform-origin:0.00px 50%;transform:scaleX(0.9395);">Properties</span>
<svg style="left:1078px;top:452px;" width="225" height="5" viewBox="0 0 225 5"><defs><pattern id="g11232" width="4" height="4" patternUnits="userSpaceOnUse"><rect x="0" y="0" width="1" height="1" fill="#999"/><rect x="2" y="2" width="1" height="1" fill="#999"/></pattern></defs><rect width="225" height="5" fill="url(#g11232)"/></svg>
<svg style="left:1311.0px;top:452.0px;" width="8" height="4" viewBox="0 0 8 4"><path d="M0 0H8L4.0 4Z" fill="#1e1e1e"/></svg>
<svg style="left:1328.0px;top:449px;" width="8" height="11" viewBox="0 0 8 11"><path d="M1.5 0.5H6.5M2 0.5V6.5M5.5 0.5V6.5M4.6 0.5V6.5M0 6.5H7.5M3.5 6.5V11" stroke="#1e1e1e" stroke-width="1" fill="none"/></svg>
<svg style="left:1343.3px;top:449.8px;" width="9" height="9" viewBox="0 0 9 9"><path d="M0.7 0.7L8.3 8.3M8.3 0.7L0.7 8.3" stroke="#1e1e1e" stroke-width="1.5" fill="none"/></svg>
<div style="left:1013px;top:465px;width:345px;height:24px;background:#fff;"></div>
<span class="t" style="left:1018.50px;top:471.00px;font-size:12px;color:#1e1e1e;font-weight:bold;transform-origin:0.00px 50%;transform:scaleX(0.9636);">main</span>
<span class="t" style="left:1051.50px;top:471.00px;font-size:12px;color:#1e1e1e;transform-origin:0.00px 50%;transform:scaleX(0.9744);">VCCodeFunction</span>
<svg style="left:1349.5px;top:476.0px;" width="6" height="3" viewBox="0 0 6 3"><path d="M0 0H6L3.0 3Z" fill="#717171"/></svg>
<div style="left:1013px;top:489px;width:346px;height:27px;background:#eeeef2;"></div>
<div style="left:1016px;top:491px;width:23px;height:22px;background:#eef0f6;border:1px solid #3399ff;box-sizing:border-box;"></div>
<div style="left:1065px;top:493px;width:1px;height:18px;background:#ccced9;"></div>
<svg style="left:1019px;top:494px;" width="17" height="16" viewBox="0 0 17 16"><rect x="0.5" y="0.8" width="5" height="5" fill="#424242"/><rect x="0.5" y="9.8" width="5" height="5" fill="#424242"/><rect x="2.3" y="2.6" width="1.4" height="1.4" fill="#eeeef2"/><rect x="2.3" y="11.6" width="1.4" height="1.4" fill="#eeeef2"/><path d="M7 1.5H12.5M13.5 1.5H14.5M7 3.5H11.5M12.5 3.5H13.5M7 5.5H12.5M13.5 5.5H14.5M7 10.5H12.5M13.5 10.5H14.5M7 12.5H11.5M7 14.5H12.5M13.5 14.5H14.5" stroke="#424242"/></svg>
<svg style="left:1043px;top:494px;" width="15" height="16" viewBox="0 0 15 16"><rect x="0" y="1" width="7" height="7" fill="#424242"/><text x="3.5" y="7" font-family="Liberation Sans" font-size="7" font-weight="bold" text-anchor="middle" fill="#eeeef2">A</text><path d="M0.6 10H6L0.8 14.8H6.4" stroke="#424242" stroke-width="1.6" fill="none"/><path d="M11.2 4V12M8.4 9.6L11.2 12.6L14 9.6" stroke="#00539c" stroke-width="1.9" fill="none"/></svg>
<svg style="left:1073px;top:494.5px;" width="13" height="14" viewBox="0 0 13 14"><path d="M2.3 11.8L7.4 6.6" stroke="#b8b8bd" stroke-width="3.1" stroke-linecap="round"/><circle cx="8.7" cy="4.7" r="3.8" fill="#b8b8bd"/><path d="M8.9 4.5L13.2 0.2" stroke="#eeeef2" stroke-width="2.7"/></svg>
<div style="left:1013px;top:516px;width:346px;height:119px;background:#f5f5f5;"></div>
<div style="left:1013px;top:516px;width:328px;height:19px;background:#eeeef2;"></div>
<div style="left:1013px;top:535px;width:15px;height:100px;background:#eeeef2;"></div>
<div style="left:1028px;top:535px;width:152px;height:19px;background:#eeeef2;"></div>
<div style="left:1028px;top:554px;width:313px;height:1px;background:#e9e9ee;"></div>
<div style="left:1028px;top:573px;width:313px;height:1px;background:#e9e9ee;"></div>
<div style="left:1028px;top:592px;width:313px;height:1px;background:#e9e9ee;"></div>
<div style="left:1028px;top:611px;width:313px;height:1px;background:#e9e9ee;"></div>
<div style="left:1028px;top:630px;width:313px;height:1px;background:#e9e9ee;"></div>
<div style="left:1180px;top:535px;width:1px;height:100px;background:#e9e9ee;"></div>
<div style="left:1016px;top:521px;width:9px;height:9px;background:#fff;border:1px solid #555;box-sizing:border-box;"></div>
<div style="left:1018px;top:525px;width:5px;height:1px;background:#000;"></div>
<span class="t" style="left:1031.50px;top:520.00px;font-size:12px;color:#1e1e1e;font-weight:bold;transform-origin:0.00px 50%;transform:scaleX(0.9700);">C++</span>
<span class="t" style="left:1032.50px;top:539.00px;font-size:12px;color:#1e1e1e;transform-origin:0.00px 50%;transform:scaleX(1.0015);">(Name)</span>
<span class="t" style="left:1184.50px;top:539.00px;font-size:12px;color:#1e1e1e;font-weight:bold;transform-origin:0.00px 50%;transform:scaleX(0.9636);">main</span>
<span class="t" style="left:1032.50px;top:558.00px;font-size:12px;color:#6d6d6d;transform-origin:0.00px 50%;transform:scaleX(0.9361);">File</span>
<span class="t" style="left:1185.50px;top:558.00px;font-size:12px;color:#6d6d6d;font-weight:bold;transform-origin:0.00px 50%;transform:scaleX(0.9709);">c:\Users\Kieu Trinh\Docume</span>
<span class="t" style="left:1032.50px;top:577.00px;font-size:12px;color:#6d6d6d;transform-origin:0.00px 50%;transform:scaleX(1.0044);">FullName</span>
<span class="t" style="left:1184.50px;top:577.00px;font-size:12px;color:#6d6d6d;font-weight:bold;transform-origin:0.00px 50%;transform:scaleX(0.9636);">main</span>
<span class="t" style="left:1032.50px;top:596.00px;font-size:12px;color:#1e1e1e;transform-origin:0.00px 50%;transform:scaleX(0.9709);">IsDefault</span>
<span class="t" style="left:1185.50px;top:596.00px;font-size:12px;color:#1e1e1e;font-weight:bold;transform-origin:0.00px 50%;transform:scaleX(0.8486);">False</span>
<span class="t" style="left:1032.50px;top:615.00px;font-size:12px;color:#1e1e1e;transform-origin:0.00px 50%;transform:scaleX(0.9328);">IsDelete</span>
<span class="t" style="left:1185.50px;top:615.00px;font-size:12px;color:#1e1e1e;font-weight:bold;transform-origin:0.00px 50%;transform:scaleX(0.8486);">False</span>
<div style="left:1341px;top:516px;width:17px;height:119px;background:#f5f5f5;"></div>
<svg style="left:1345px;top:522px;" width="9" height="5" viewBox="0 0 9 5"><path d="M0 5L4.5 0L9 5Z" fill="#868999"/></svg>
<svg style="left:1345px;top:624px;" width="9" height="5" viewBox="0 0 9 5"><path d="M0 0H9L4.5 5Z" fill="#868999"/></svg>
<div style="left:1345px;top:533px;width:9px;height:39px;background:#c2c3c9;"></div>
<div style="left:1013px;top:635px;width:346px;height:1px;background:#e0e0e6;"></div>
<div style="left:1013px;top:636px;width:346px;height:62px;background:#f5f5f5;"></div>
<span class="t" style="left:1019.50px;top:644.00px;font-size:12px;color:#1e1e1e;font-weight:bold;transform-origin:0.00px 50%;transform:scaleX(0.9954);">(Name)</span>
<span class="t" style="left:1018.50px;top:662.00px;font-size:12px;color:#1e1e1e;transform-origin:0.00px 50%;transform:scaleX(0.9993);">Sets/returns the name of the object.</span>
<div style="left:0px;top:705px;width:1366px;height:23px;background:#007acc;"></div>
<span class="t" style="left:4.80px;top:710.75px;font-size:12.5px;color:#fff;transform-origin:0.00px 50%;transform:scaleX(0.8477);">Ready</span>
<span class="t" style="left:1006.50px;top:710.75px;font-size:12.5px;color:#fff;transform-origin:0.00px 50%;transform:scaleX(0.8889);">Ln 160</span>
<span class="t" style="left:1097.50px;top:710.75px;font-size:12.5px;color:#fff;transform-origin:0.00px 50%;transform:scaleX(0.8983);">Col 44</span>
<span class="t" style="left:1189.50px;top:710.75px;font-size:12.5px;color:#fff;transform-origin:0.00px 50%;transform:scaleX(0.8833);">Ch 32</span>
<span class="t" style="left:1324.50px;top:710.75px;font-size:12.5px;color:#fff;transform-origin:0.00px 50%;transform:scaleX(0.9127);">INS</span>
<div style="left:0px;top:728px;width:1366px;height:40px;background:#08090c;"></div>
<div style="left:0px;top:728px;width:48px;height:40px;background:#000;"></div>
<div style="left:48px;top:728px;width:343px;height:40px;background:#333;"></div>
<span class="t" style="left:59.00px;top:740.50px;font-size:16px;color:#9c9c9c;transform-origin:0.00px 50%;transform:scaleX(0.9260);">Search the web and Windows</span>
<svg style="left:16px;top:739px;" width="16" height="17" viewBox="0 0 16 17"><path d="M0 2.6L6.6 1.6V8H0ZM7.6 1.45L16 0.2V8H7.6ZM0 9H6.6V15.4L0 14.4ZM7.6 9H16V16.8L7.6 15.55Z" fill="#fff"/></svg>
<svg style="left:405px;top:741px;" width="22" height="14" viewBox="0 0 22 14"><rect x="5.1" y="0.6" width="11.8" height="12.8" fill="none" stroke="#fff" stroke-width="1.2"/><path d="M3 3H1.2V11H3M19 3H20.8V11H19" fill="none" stroke="#fff" stroke-width="1.2"/></svg>
<svg style="left:456px;top:738px;" width="21" height="21" viewBox="0 0 21 21"><path d="M0.5 9.5Q1.5 1 10.5 0.5Q20 0.8 20.5 11V13H7Q7.5 17 12.5 17Q16 17 19 15.2V19.3Q15.5 21 11.5 20.6Q4 20 3.5 12.5Q3.8 8 8 5.8Q4 6 0.5 9.5ZM7 8.8H14.5Q14.3 5 10.8 5Q7.6 5.2 7 8.8Z" fill="#1e8fe0"/></svg>
<svg style="left:504px;top:738px;" width="22" height="19" viewBox="0 0 22 19"><path d="M1 2H8L9.5 3.5H21V6H1Z" fill="#e8b13c"/><rect x="1" y="5" width="20" height="13" fill="#f7d774"/><path d="M1 18V9L3 7.5H19L21 9V18Z" fill="#ffe794"/><path d="M6 12H16V19H6Z" fill="#3a9ae0"/><rect x="8.5" y="14.5" width="5" height="4.5" fill="#ffe794"/></svg>
<div style="left:495px;top:766px;width:40px;height:2px;background:#76b9ed;"></div>
<svg style="left:552px;top:737px;" width="24" height="24" viewBox="0 0 24 24"><circle cx="11" cy="11" r="10.5" fill="#db4437"/><path d="M11 11L1.9 5.8A10.5 10.5 0 0 0 11.5 21.5Z" fill="#0f9d58"/><path d="M11 11L11.5 21.5A10.5 10.5 0 0 0 20.3 6Z" fill="#ffcd40"/><circle cx="11" cy="11" r="4.9" fill="#f1f1f1"/><circle cx="11" cy="11" r="3.9" fill="#4285f4"/><rect x="12.5" y="12.5" width="11" height="11" fill="#d9d9d9"/><circle cx="18" cy="16.3" r="2.1" fill="#8a8a8a"/><path d="M14 22.5Q14 19.2 18 19.2Q22 19.2 22 22.5Z" fill="#8a8a8a"/></svg>
<div style="left:544px;top:766px;width:40px;height:2px;background:#76b9ed;"></div>
<svg style="left:602px;top:736px;" width="22" height="23" viewBox="0 0 22 23"><path d="M6.5 6V4Q6.5 0.8 11 0.8Q15.5 0.8 15.5 4V6" fill="none" stroke="#fff" stroke-width="1.3"/><path d="M0.5 6H21.5L19.5 22.5H2.5Z" fill="#fff"/><path d="M6.5 10.2L10.4 9.6V13.6H6.5ZM11.3 9.5L15.8 8.8V13.6H11.3ZM6.5 14.4H10.4V18.4L6.5 17.8ZM11.3 14.4H15.8V19.2L11.3 18.5Z" fill="#0b0c10"/></svg>
<svg style="left:650px;top:738px;" width="24" height="21" viewBox="0 0 24 21"><rect x="0.3" y="1" width="10.4" height="10" rx="1" fill="#e4e4e4"/><rect x="12.5" y="1" width="10.5" height="10" rx="1" fill="#e4e4e4"/><rect x="6" y="9.3" width="12" height="10.7" rx="1" fill="#ededed"/><path d="M0.3 9.5H6V11H1Z M18 9.5H23V11H18Z M6 18.5H18V20H7Z" fill="#b9b9b9"/><text x="5.3" y="7.8" font-family="Liberation Sans" font-size="7" font-weight="bold" text-anchor="middle" fill="#e01818">u</text><text x="18" y="7.8" font-family="Liberation Sans" font-size="7" font-weight="bold" text-anchor="middle" fill="#e01818">i</text><text x="12" y="16.6" font-family="Liberation Sans" font-size="7" font-weight="bold" text-anchor="middle" fill="#e01818">n</text></svg>
<svg style="left:700px;top:737px;" width="22" height="22" viewBox="0 0 22 22"><circle cx="11" cy="11" r="10" fill="#1a0505" stroke="#e02020" stroke-width="1.6"/><circle cx="11" cy="11" r="5.2" fill="#e02020"/><path d="M11 3.2V6M11 16V18.8M3.2 11H6M16 11H18.8M5.5 5.5L7.4 7.4M14.6 14.6L16.5 16.5M16.5 5.5L14.6 7.4M5.5 16.5L7.4 14.6" stroke="#e02020" stroke-width="1.8"/><path d="M8.5 13.5L11 8.5L13.5 11.5L10.5 11Z" fill="#1a0505"/></svg>
<svg style="left:748px;top:740px;" width="24" height="18" viewBox="0 0 24 18"><path d="M1 13L14 3.5L22.5 12.5L22.5 16L2 16Z" fill="#9aa0a0"/><path d="M3.5 13.5L13.5 6L15.5 13.8Z" fill="#0b0c10"/><path d="M14 4L22 14.5M16.5 3L23 13" stroke="#e0e0e0" stroke-width="1.2"/><path d="M0.5 10.5H9L7 15.5H2Z" fill="#e8e8e8"/><path d="M2 12L7.5 13.5" stroke="#444" stroke-width="1"/></svg>
<div style="left:785px;top:728px;width:48px;height:40px;background:#3a3b40;"></div>
<svg style="left:798px;top:737px;" width="22" height="23" viewBox="0 0 22 23"><path fill="#68217a" d="M0 0H22V23H0Z"/><path fill="#7f3a91" d="M0 20H22V23H0Z"/><path fill="#fff" d="M15.8 0.6L20.8 2.8V17.6L15.8 19.8L8.6 12.7L4.4 16L2 14.9V5.5L4.4 4.4L8.6 7.7ZM15.8 6.2L11.2 10.2L15.8 14.2ZM4.4 7.8V12.6L6.8 10.2Z"/></svg>
<div style="left:785px;top:766px;width:48px;height:2px;background:#76b9ed;"></div>
<svg style="left:845px;top:736px;" width="25" height="25" viewBox="0 0 25 25"><path d="M0 0H19L25 6V25H0Z" fill="#8e2f91"/><path d="M19 0V6H25Z" fill="#5b1a5e"/><path d="M16.5 7.2Q13 4.2 9 6.2Q5.2 8.5 6.2 12.5Q7.5 16 11.5 15.8Q15 15.3 16 12H11.5" fill="none" stroke="#fff" stroke-width="2.2"/><text x="11.5" y="23" font-family="Liberation Sans" font-size="6.5" font-weight="bold" text-anchor="middle" fill="#fff">PDF</text></svg>
<div style="left:837px;top:766px;width:40px;height:2px;background:#76b9ed;"></div>
<svg style="left:1141px;top:744px;" width="12" height="7" viewBox="0 0 12 7"><path d="M0.7 6.5L6 1.2L11.3 6.5" fill="none" stroke="#fff" stroke-width="1.4"/></svg>
<svg style="left:1163px;top:742px;" width="17" height="12" viewBox="0 0 17 12"><rect x="5.5" y="2.5" width="10" height="7" fill="none" stroke="#fff" stroke-width="1"/><path d="M16 4.5V7.5" stroke="#fff" stroke-width="1.4"/><path d="M8 4L12 8M12 4L8 8" stroke="#fff" stroke-width="1.1"/><path d="M1.5 0V2.5M4 0V2.5M0.5 2.5H5V5Q5 6.5 2.75 6.5Q0.5 6.5 0.5 5ZM2.75 6.5V11.5" stroke="#fff" fill="none" stroke-width="1"/></svg>
<svg style="left:1190px;top:742px;" width="13" height="13" viewBox="0 0 13 13"><path d="M1 12.5A11.5 11.5 0 0 1 12.5 1" fill="none" stroke="#9a9a9a" stroke-width="1.1"/><path d="M4.5 12.5A8 8 0 0 1 12.5 4.5" fill="none" stroke="#fff" stroke-width="1.1"/><path d="M8 12.5A4.5 4.5 0 0 1 12.5 8" fill="none" stroke="#fff" stroke-width="1.1"/><rect x="9.5" y="9.5" width="3.5" height="3.5" fill="#fff"/></svg>
<svg style="left:1211px;top:741px;" width="16" height="14" viewBox="0 0 16 14"><path d="M0.5 4.5H3.5L7 1V13L3.5 9.5H0.5Z" fill="none" stroke="#fff" stroke-width="1"/><path d="M9 4.5Q10.5 7 9 9.5M11 2.8Q13.6 7 11 11.2" fill="none" stroke="#fff" stroke-width="1"/><path d="M13 1Q16.6 7 13 13" fill="none" stroke="#8a8a8a" stroke-width="1"/></svg>
<svg style="left:1235px;top:740px;" width="16" height="16" viewBox="0 0 16 16"><path d="M0 0H16V12.5H10.5L8 15.5L5.5 12.5H0Z" fill="#fff"/><path d="M2.5 3H13.5M2.5 5.7H13.5M2.5 8.4H10" stroke="#0b0c10" stroke-width="1.3"/></svg>
<div style="left:1361px;top:728px;width:1px;height:40px;background:#55565a;"></div>
<span class="t" style="left:1260.50px;top:742.00px;font-size:12px;color:#fff;transform-origin:0.00px 50%;transform:scaleX(0.8884);">ENG</span>
<span class="t" style="left:1305.50px;top:733.00px;font-size:12px;color:#fff;transform-origin:0.00px 50%;transform:scaleX(0.9287);">9:26 PM</span>
<span class="t" style="left:1299.50px;top:750.00px;font-size:12px;color:#fff;transform-origin:0.00px 50%;transform:scaleX(0.9656);">3/25/2016</span>

</body></html>
